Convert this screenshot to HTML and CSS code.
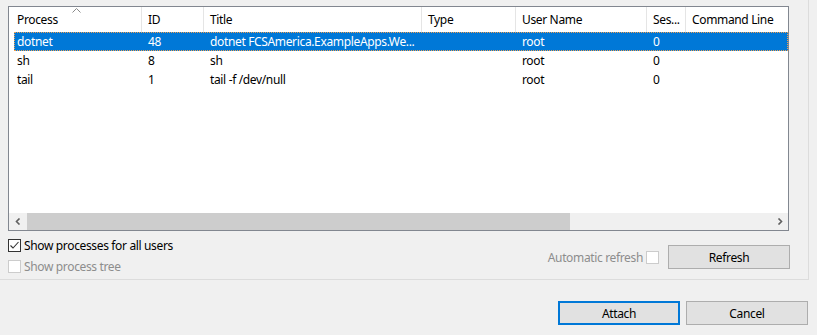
FILE: index.html
```html
<!DOCTYPE html>
<html>
<head>
<title>Attach to Process</title>
<meta charset="UTF-8">
<link rel="stylesheet" href="styles.css">
</head>
<body>
<div class="dialog">
 <div class="group">
  <div class="proclist">
   <div class="lv-head">
    <div class="lv-col col-process">Process
     <svg class="sort-arrow" width="9" height="5" viewBox="0 0 9 5"><polyline points="0.5,4.5 4.5,0.5 8.5,4.5" fill="none" stroke="#8a8a8a" stroke-width="1"/></svg>
    </div>
    <div class="lv-col col-id">ID</div>
    <div class="lv-col col-title">Title</div>
    <div class="lv-col col-type">Type</div>
    <div class="lv-col col-user">User Name</div>
    <div class="lv-col col-ses">Ses...</div>
    <div class="lv-col col-cmd">Command Line</div>
   </div>
   <div class="lv-body">
    <div class="lv-row selected">
     <div class="lv-cell col-process">dotnet</div>
     <div class="lv-cell col-id">48</div>
     <div class="lv-cell col-title">dotnet FCSAmerica.ExampleApps.We...</div>
     <div class="lv-cell col-type"></div>
     <div class="lv-cell col-user">root</div>
     <div class="lv-cell col-ses">0</div>
     <div class="lv-cell col-cmd"></div>
    </div>
    <div class="lv-row">
     <div class="lv-cell col-process">sh</div>
     <div class="lv-cell col-id">8</div>
     <div class="lv-cell col-title">sh</div>
     <div class="lv-cell col-type"></div>
     <div class="lv-cell col-user">root</div>
     <div class="lv-cell col-ses">0</div>
     <div class="lv-cell col-cmd"></div>
    </div>
    <div class="lv-row">
     <div class="lv-cell col-process">tail</div>
     <div class="lv-cell col-id">1</div>
     <div class="lv-cell col-title">tail -f /dev/null</div>
     <div class="lv-cell col-type"></div>
     <div class="lv-cell col-user">root</div>
     <div class="lv-cell col-ses">0</div>
     <div class="lv-cell col-cmd"></div>
    </div>
   </div>
   <div class="hscroll">
    <div class="sb-btn">
     <svg width="6" height="7" viewBox="0 0 6 7"><polyline points="4.5,0.5 1.5,3.5 4.5,6.5" fill="none" stroke="#606060" stroke-width="1.6"/></svg>
    </div>
    <div class="sb-track">
     <div class="sb-thumb"></div>
    </div>
    <div class="sb-btn">
     <svg width="6" height="7" viewBox="0 0 6 7"><polyline points="1.5,0.5 4.5,3.5 1.5,6.5" fill="none" stroke="#606060" stroke-width="1.6"/></svg>
    </div>
   </div>
  </div>
  <div class="options">
   <div class="checks">
    <label class="check-row">
     <span class="checkbox checked">
      <svg width="11" height="11" viewBox="0 0 11 11"><polyline points="1.5,5.5 4,8 9.5,2" fill="none" stroke="#333333" stroke-width="1.1"/></svg>
     </span>
     Show processes for all users
    </label>
    <label class="check-row disabled">
     <span class="checkbox"></span>
     Show process tree
    </label>
   </div>
   <div class="refresh-box">
    <span class="auto-label">Automatic refresh</span>
    <span class="checkbox light"></span>
    <button class="btn btn-refresh">Refresh</button>
   </div>
  </div>
 </div>
 <div class="actions">
  <button class="btn btn-default">Attach</button>
  <button class="btn">Cancel</button>
 </div>
</div>
</body>
</html>
```

FILE: styles.css
```css
html, body {
 margin: 0;
 padding: 0;
}
body {
 width: 817px;
 height: 335px;
 overflow: hidden;
 background-color: #f0f0f0;
 font-family: "Noto Sans", "Open Sans", sans-serif;
 font-size: 12px;
 letter-spacing: -0.35px;
 color: #000000;
}
.dialog {
 width: 817px;
 height: 335px;
}
.group {
 box-sizing: border-box;
 width: 809px;
 height: 280px;
 padding: 6px 0 0 8px;
 border-right: 1px solid #dcdcdc;
 border-bottom: 1px solid #dcdcdc;
}
.proclist {
 box-sizing: border-box;
 width: 781px;
 height: 225px;
 border: 1px solid #828790;
 background-color: #ffffff;
 display: flex;
 flex-direction: column;
 overflow: hidden;
}
.lv-head {
 height: 25px;
 display: flex;
 flex: none;
}
.lv-col {
 position: relative;
 box-sizing: border-box;
 height: 25px;
 line-height: 25px;
 padding-left: 6px;
 border-right: 1px solid #e5e5e5;
 white-space: nowrap;
 flex: none;
}
.lv-head .col-process {
 padding-left: 8px;
}
.lv-head .col-cmd {
 border-right: none;
}
.sort-arrow {
 position: absolute;
 left: 63px;
 top: 1px;
}
.col-process { width: 133px; }
.col-id { width: 62px; }
.col-title { width: 218px; }
.col-type { width: 94px; }
.col-user { width: 131px; }
.col-ses { width: 39px; }
.col-cmd { width: 110px; }
.lv-body {
 flex: 1;
}
.lv-row {
 display: flex;
 height: 19px;
 line-height: 19px;
 margin-left: 5px;
 box-sizing: border-box;
}
.lv-cell {
 box-sizing: border-box;
 padding-left: 6px;
 white-space: nowrap;
 overflow: hidden;
 flex: none;
}
.lv-row .col-process {
 width: 128px;
 padding-left: 3px;
}
.lv-row.selected {
 background-color: #0078d7;
 color: #ffffff;
 outline: 1px dotted #f0a050;
 outline-offset: -1px;
}
.hscroll {
 height: 17px;
 flex: none;
 display: flex;
 background-color: #f0f0f0;
}
.sb-btn {
 width: 17px;
 height: 17px;
 display: flex;
 align-items: center;
 justify-content: center;
 flex: none;
}
.sb-track {
 flex: 1;
 display: flex;
}
.sb-thumb {
 width: 543px;
 height: 17px;
 margin-left: 1px;
 background-color: #cdcdcd;
}
.options {
 width: 782px;
 display: flex;
 justify-content: space-between;
}
.checks {
 padding-top: 5px;
 display: flex;
 flex-direction: column;
 gap: 2px;
}
.check-row {
 display: flex;
 align-items: center;
 height: 19px;
 gap: 3px;
 white-space: nowrap;
}
.check-row.disabled {
 color: #8d8d8d;
}
.checkbox {
 box-sizing: border-box;
 width: 13px;
 height: 13px;
 border: 1px solid #cccccc;
 background-color: #ffffff;
 display: inline-flex;
 align-items: center;
 justify-content: center;
 flex: none;
}
.checkbox.checked {
 border-color: #333333;
}
.refresh-box {
 padding-top: 14px;
 display: flex;
 align-items: center;
 height: 24px;
}
.auto-label {
 color: #8d8d8d;
 margin-right: 3px;
}
.refresh-box .checkbox {
 margin-right: 9px;
}
.btn {
 box-sizing: border-box;
 width: 122px;
 height: 24px;
 border: 1px solid #adadad;
 background-color: #e1e1e1;
 font-family: "Noto Sans", "Open Sans", sans-serif;
 font-size: 12px;
 letter-spacing: -0.35px;
 color: #000000;
 padding: 0;
}
.btn-default {
 border: 2px solid #0078d7;
}
.actions {
 width: 808px;
 margin-top: 21px;
 display: flex;
 justify-content: flex-end;
 gap: 6px;
}
```
